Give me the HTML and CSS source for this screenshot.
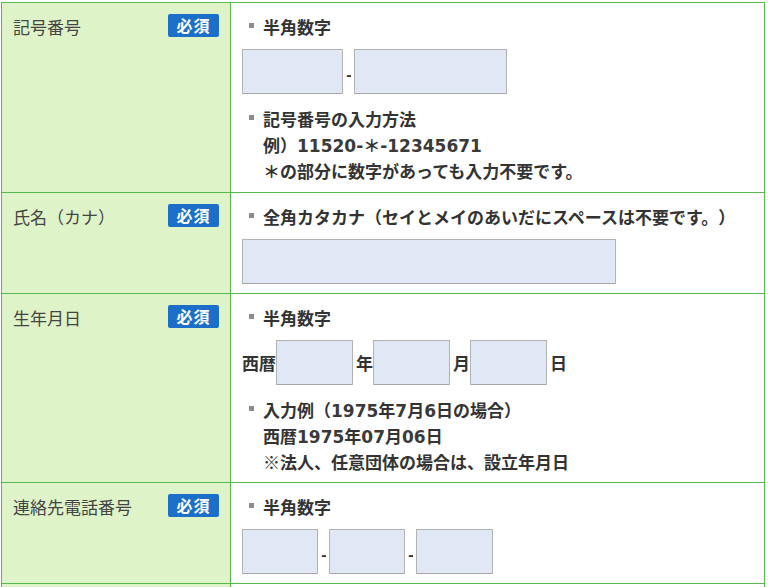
FILE: index.html
```html
<!DOCTYPE html>
<html lang="ja">
<head>
<meta charset="utf-8">
<title>入力フォーム</title>
<link rel="stylesheet" href="styles.css">
</head>
<body>
<div class="form">
  <div class="row">
    <div class="head">
      <span class="label">記号番号</span>
      <span class="badge">必須</span>
    </div>
    <div class="body">
      <div class="item"><span class="dot"></span><span>半角数字</span></div>
      <div class="fields">
        <input class="box w101" type="text"><span class="dash">-</span><input class="box w153" type="text">
      </div>
      <div class="note"><span class="dot"></span><p>記号番号の入力方法<br>例）<span class="num">11520-</span>＊<span class="num">-12345671</span><br>＊の部分に数字があっても入力不要です。</p></div>
    </div>
  </div>
  <div class="row">
    <div class="head">
      <span class="label">氏名（カナ）</span>
      <span class="badge">必須</span>
    </div>
    <div class="body pb">
      <div class="item"><span class="dot"></span><span>全角カタカナ（セイとメイのあいだにスペースは不要です。）</span></div>
      <div class="fields">
        <input class="box w374" type="text">
      </div>
    </div>
  </div>
  <div class="row">
    <div class="head">
      <span class="label">生年月日</span>
      <span class="badge">必須</span>
    </div>
    <div class="body pb3">
      <div class="item"><span class="dot"></span><span>半角数字</span></div>
      <div class="fields date">
        <span>西暦</span><input class="box w77" type="text"><span class="unit">年</span><input class="box w77" type="text"><span class="unit">月</span><input class="box w77" type="text"><span class="unit">日</span>
      </div>
      <div class="note"><span class="dot"></span><p>入力例（<span class="num">1975</span>年<span class="num">7</span>月<span class="num">6</span>日の場合）<br>西暦<span class="num">1975</span>年<span class="num">07</span>月<span class="num">06</span>日<br>※法人、任意団体の場合は、設立年月日</p></div>
    </div>
  </div>
  <div class="row">
    <div class="head">
      <span class="label">連絡先電話番号</span>
      <span class="badge">必須</span>
    </div>
    <div class="body pb">
      <div class="item"><span class="dot"></span><span>半角数字</span></div>
      <div class="fields">
        <input class="box w76" type="text"><span class="dash">-</span><input class="box w76" type="text"><span class="dash">-</span><input class="box w77" type="text">
      </div>
    </div>
  </div>
  <div class="row last">
    <div class="head"></div>
    <div class="body pb"></div>
  </div>
</div>
</body>
</html>
```

FILE: styles.css
```css
* { box-sizing: border-box; }
html, body {
  margin: 0;
  padding: 0;
  background: #fff;
}
body {
  font-family: "Noto Sans CJK JP", "Noto Sans", sans-serif;
  font-size: 17px;
  color: #333;
  text-spacing-trim: space-all;
}
.form {
  margin: 2px 0 0 1px;
  width: 764px;
  border: 1px solid #55b94b;
  border-bottom: none;
}
.row {
  display: grid;
  grid-template-columns: 229px 1fr;
  border-bottom: 1px solid #55b94b;
}
.row.last { min-height: 60px; }
.head {
  background: #dff3c8;
  border-right: 1px solid #55b94b;
  display: flex;
  justify-content: space-between;
  align-items: flex-start;
  padding: 10.5px 11px 0 11px;
}
.label {
  color: #444;
  line-height: 26px;
  font-weight: 400;
}
.badge {
  margin-top: 0.5px;
  width: 51px;
  height: 23px;
  line-height: 23px;
  text-align: center;
  background: #1b6fc8;
  color: #fff;
  font-weight: 700;
  font-size: 16px;
  letter-spacing: 1px;
  border-radius: 2px;
}
.body {
  padding: 10.5px 11px 8.5px 11px;
  font-weight: 700;
}
.body.pb { padding-bottom: 9px; }
.body.pb3 { padding-bottom: 7.5px; }
.item {
  display: flex;
  align-items: flex-start;
  line-height: 26px;
  padding-left: 7px;
}
.dot {
  flex: none;
  width: 5px;
  height: 5px;
  background: #8c8c8c;
  margin-top: 9.5px;
  margin-right: 9px;
}
.fields {
  display: flex;
  align-items: center;
  margin-top: 9.5px;
  line-height: 26px;
}
.box {
  display: block;
  height: 45px;
  margin: 0;
  padding: 0;
  border: 1px solid #b2b2b2;
  border-bottom-color: #a6a6a6;
  background: #dfe8f4;
  border-radius: 1px;
  font: inherit;
}
.w76 { width: 76px; }
.w77 { width: 77px; }
.w101 { width: 101px; }
.w153 { width: 153px; }
.w374 { width: 374px; }
.dash {
  margin: 4px 3px 0 3px;
  width: 5px;
  overflow: hidden;
}
.date .unit { margin-left: 3px; width: 17px; }
.note {
  display: flex;
  align-items: flex-start;
  margin-top: 11.5px;
  padding-left: 7px;
  line-height: 26px;
}
.note p { margin: 0; }
.num {
  font-family: "DejaVu Sans", "Noto Sans CJK JP", sans-serif;
  font-size: 17px;
  font-weight: 700;
  line-height: 1;
  color: #3a3a3a;
}
```
